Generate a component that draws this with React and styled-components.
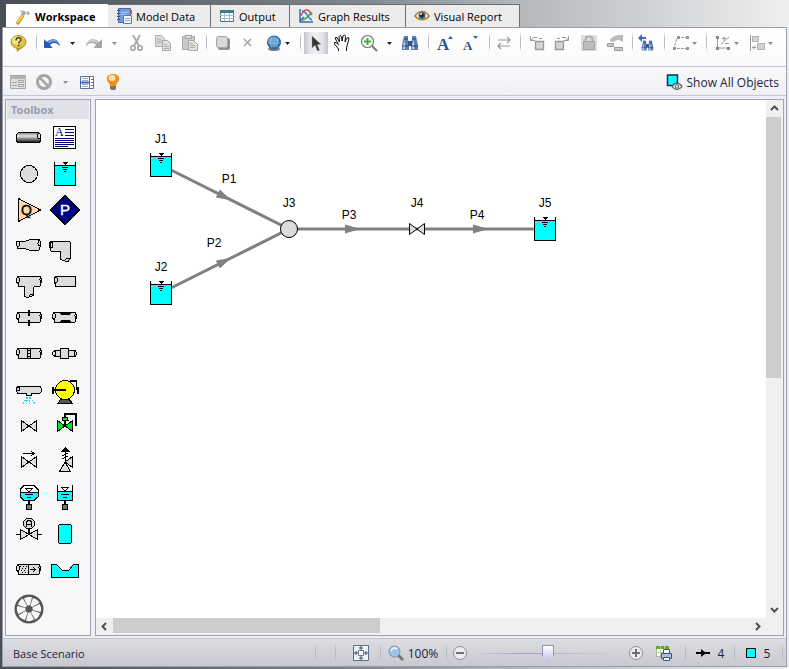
import React from 'react';
import styled, { createGlobalStyle } from 'styled-components';

const GlobalStyle = createGlobalStyle`
  * {
    box-sizing: border-box;
  }

  body {
    margin: 0;
    font-family: 'Open Sans', 'Noto Sans', sans-serif;
    font-size: 11px;
    color: #1e1e3c;
  }

  button {
    font: inherit;
    color: inherit;
  }
`;

const Window = styled.div`
  display: flex;
  flex-direction: column;
  min-height: 100vh;
  padding: 4px 2px 2px;
  background: linear-gradient(90deg, #494e57, #7f858b 45%, #b4b8ba 66%, #eeeff1);
`;

const Tabs = styled.nav`
  display: flex;
  align-items: flex-end;
  height: 23px;
  padding-left: 4px;
`;

const Tab = styled.button`
  display: flex;
  align-items: center;
  gap: 4px;
  width: ${props => props.$width}px;
  height: ${props => (props.$active ? 24 : 23)}px;
  margin-bottom: ${props => (props.$active ? -1 : 0)}px;
  padding: 0 0 0 8px;
  border: 1px solid ${props => (props.$active ? '#fff' : '#6e6e70')};
  border-left-width: ${props => (props.$active ? 1 : 0)}px;
  border-bottom: 0;
  background: ${props => (props.$active ? '#fff' : '#ececec')};
  color: #000;
  font-weight: ${props => (props.$active ? 700 : 400)};
  white-space: nowrap;
`;

const Frame = styled.main`
  display: flex;
  flex: 1;
  flex-direction: column;
  border: 1px solid #9a9dac;
  background: #eeeef3;
`;

const Toolbar = styled.div`
  display: flex;
  align-items: flex-start;
  height: ${props => props.$height}px;
  padding: 4px 7px 0 2px;
  border-bottom: 1px solid #c5c6d2;
  background: linear-gradient(${props => props.$colors});
`;

const ToolButton = styled.button`
  display: flex;
  flex: none;
  align-items: center;
  justify-content: center;
  gap: 3px;
  width: ${props => props.$width}px;
  height: 22px;
  padding: 0;
  border: 0;
  background: ${props =>
    props.$pressed
      ? 'linear-gradient(90deg, #c3c4cf, #e4e4ea 25%, #f0f0f4 50%, #e4e4ea 75%, #c3c4cf)'
      : 'none'};
`;

const Separator = styled.span`
  flex: none;
  width: ${props => props.$width}px;
  height: 20px;
  background: linear-gradient(transparent, #b9bac7 30%, #b9bac7 70%, transparent)
    center / 1px 100% no-repeat;
`;

const ShowAll = styled.button`
  display: flex;
  align-items: center;
  gap: 4px;
  height: 22px;
  margin-left: auto;
  padding: 0;
  border: 0;
  background: none;
  font-size: 12px;
  white-space: nowrap;
`;

const Body = styled.div`
  display: flex;
  flex: 1;
  gap: 4px;
  padding: 3px 2px 2px;
`;

const Toolbox = styled.aside`
  flex: none;
  width: 86px;
  border: 1px solid #9fa2b3;
  background: #f7f7f8;
`;

const ToolboxTitle = styled.h2`
  height: 19px;
  margin: 0 1px 1px;
  padding-left: 4px;
  background: #e1e2e8;
  color: #9b9dac;
  font: bold 11px/20px 'Noto Sans', sans-serif;
`;

const ToolGrid = styled.div`
  display: grid;
  grid-template-columns: 36px 36px;
  grid-auto-rows: 36px;
  padding-left: 5px;
`;

const GridButton = styled.button`
  display: block;
  padding: 0;
  border: 0;
  background: none;
`;

const Canvas = styled.section`
  display: grid;
  flex: 1;
  grid-template-columns: 1fr 17px;
  grid-template-rows: 1fr 17px;
  min-width: 0;
  border: 1px solid #9fa2b3;
  background: #f0f0f0;
`;

const Sheet = styled.div`
  min-width: 0;
  overflow: hidden;
  background: #fff;

  svg {
    display: block;
    font: 12px 'Liberation Sans', sans-serif;
  }
`;

const Scrollbar = styled.div`
  display: flex;
  flex-direction: ${props => (props.$vertical ? 'column' : 'row')};
`;

const ScrollArrow = styled.button`
  display: flex;
  flex: none;
  align-items: center;
  justify-content: center;
  width: 17px;
  height: 17px;
  padding: 0;
  border: 0;
  background: none;
`;

const Thumb = styled.div`
  flex: ${props => props.$size};
  margin: ${props => (props.$vertical ? '0 2px 0 0' : '0 0 2px')};
  background: #cdcdcd;
`;

const Rest = styled.div`
  flex: ${props => props.$size};
`;

const StatusBar = styled.footer`
  display: flex;
  align-items: center;
  height: 28px;
  padding: 1px 1px 0 10px;
  border-top: 1px solid #c2c3cb;
  background: linear-gradient(#dcdde2, #c9cad1);
`;

const Scenario = styled.span`
  flex: 1;
`;

const StatusItem = styled.span`
  display: flex;
  flex: none;
  align-items: center;
  justify-content: center;
  gap: ${props => props.$gap}px;
  width: ${props => props.$width}px;
  font-size: 12px;
`;

const ZoomSlider = styled.input`
  flex: none;
  width: 154px;
  height: 22px;
  margin: 0;
  appearance: none;
  background: linear-gradient(90deg, transparent, #b39cc9 30%, #b39cc9 50%, #b2b3bc 52%, transparent)
    center / 100% 1px no-repeat;

  &::-webkit-slider-thumb {
    appearance: none;
    width: 12px;
    height: 17px;
    border: 1px solid #8f95b4;
    background: linear-gradient(#fff, #b9c2ea);
    clip-path: polygon(0 0, 100% 0, 100% 65%, 50% 100%, 0 65%);
  }
`;

const INK = '#000';
const STEEL = '#dcdcdc';
const AQUA = '#00ffff';

const Icon = ({ size = 18, children }) => (
  <svg width={size} height={size} viewBox={`0 0 ${size} ${size}`} fill="none" overflow="visible" aria-hidden="true">
    {children}
  </svg>
);

const Caret = ({ color = '#8b8b93' }) => (
  <svg width="5" height="3" viewBox="0 0 5 3" aria-hidden="true">
    <path d="M0 0h5L2.500 3z" fill={color} />
  </svg>
);

/* toolbar drawings */

const HelpIcon = () => (
  <Icon>
    <path d="M7 12l1 6 6-5z" fill="#b8992b" />
    <ellipse cx="9.500" cy="8" rx="7.500" ry="6.500" fill="#dfc443" stroke="#a8922f" />
    <ellipse cx="8" cy="6.500" rx="5" ry="4" fill="#f6e88a" />
    <path d="M7 6.500c0-3.500 5-3.500 5-.5 0 1.500-2.300 1.500-2.300 3.500M9.700 10.800v1.500" stroke="#4a4327" strokeWidth="1.500" />
  </Icon>
);

const CurveArrow = ({ dark, light, flip }) => (
  <Icon>
    <g transform={flip ? 'matrix(-1 0 0 1 18 0)' : undefined}>
      <path d="M1 5v9h8.500L7 11c3-3 7-2.500 10 1.500C16 5 9 3 4 8z" fill={dark} />
      <path d="M5 8c4-4.500 10-3 11.500 3C13 6.500 9.500 7 6 9.500z" fill={light} />
    </g>
  </Icon>
);

const CutIcon = () => (
  <Icon>
    <path d="M5 1l6 11M12 1L6 12" stroke="#a8a8a8" strokeWidth="1.800" />
    <circle cx="5" cy="14" r="2.200" stroke="#a0a0a0" strokeWidth="1.500" />
    <circle cx="12" cy="14" r="2.200" stroke="#a0a0a0" strokeWidth="1.500" />
  </Icon>
);

const CopyIcon = () => (
  <Icon>
    <path d="M1.500 1.500h6l3 3v8h-9z" fill="#ddd" stroke="#adadad" />
    <path d="M3 5h4M3 7h5M3 9h4" stroke="#adadad" />
    <path d="M8.500 6.500h5l3 3v7h-8z" fill="#e2e2e2" stroke="#a5a5a5" />
    <path d="M10 10.500h3M10 12.500h5M10 14.500h5" stroke="#aaa" />
  </Icon>
);

const PasteIcon = () => (
  <Icon>
    <path d="M1.500 2.500h12v13h-12z" fill="#c9c9c9" stroke="#aaa" />
    <path d="M4.500 1.500h6v3h-6z" fill="#ddd" stroke="#a0a0a0" />
    <path d="M7.500 6.500h5l4 4v6h-9z" fill="#e2e2e2" stroke="#a5a5a5" />
    <path d="M9 9.500h3M9 11.500h5M9 13.500h5" stroke="#aaa" />
  </Icon>
);

const DuplicateIcon = () => (
  <Icon>
    <rect x="4" y="4" width="12" height="12" rx="2" fill="#8f8f8f" />
    <rect x="2.500" y="2.500" width="11" height="11" rx="2" fill="#d8d8d8" stroke="#a5a5a5" />
  </Icon>
);

const DeleteIcon = () => (
  <Icon>
    <path d="M6 5l7 7M13 5l-7 7" stroke="#a3a3a3" strokeWidth="1.500" />
  </Icon>
);

const GlobeIcon = () => (
  <Icon size={16}>
    <ellipse cx="8" cy="14" rx="6" ry="2" fill="#777e87" />
    <circle cx="8" cy="7.500" r="7" fill="#2a669f" />
    <ellipse cx="7.500" cy="6" rx="5.500" ry="4.500" fill="#5f9bcf" />
    <path
      d="M3 5h10M2 8h12M4 11h8M8 2v11M5.500 2.500c-1.500 3-1.500 7 0 10M10.500 2.500c1.500 3 1.500 7 0 10"
      stroke="#a9cde8"
      strokeWidth=".6"
    />
  </Icon>
);

const PointerIcon = () => (
  <Icon>
    <path d="M5 2v12l3-3 2.500 6 2-1-2.500-5.500h4z" fill="#363636" stroke="#8e8e96" strokeWidth=".4" />
  </Icon>
);

const HandIcon = () => (
  <Icon>
    <path
      d="M5.500 17v-2L1.500 10V8.500H3l2.500 2L2.500 5V3.500H4L6.500 8 6 2.500 7 1.500l1.500 1L9 7l1-5 1.500-1 1 1.500L12 8l2-4 1.500-.5.5 1.500-1.500 5-1 4v3"
      fill="#fff"
      stroke="#111"
      strokeLinejoin="round"
    />
  </Icon>
);

const ZoomInIcon = () => (
  <Icon>
    <path d="M12 12l5 5" stroke="#777" strokeWidth="2" />
    <circle cx="7.500" cy="7.500" r="6" fill="#fbfbfb" stroke="#777" strokeWidth="1.200" />
    <path d="M7.500 4v7M4 7.500h7" stroke="#3faf3a" strokeWidth="2" />
  </Icon>
);

const BinocularShapes = () => (
  <>
    <path d="M3 2h4v4l1 2v8H1v-5zM11 2h4l2 9v5h-7V8l1-2z" fill="#5b80b8" />
    <path d="M3.500 4v4L2 11v4h2V9zM12 4v4l-1 3v4h2V9z" fill="#c6d9ef" />
    <path d="M7 7h4v5H7z" fill="#36558d" />
    <path d="M1 12h7M10 12h7M3 5h4M11 5h4" stroke="#2c4678" />
  </>
);

const FontIcon = ({ size, up }) => (
  <Icon>
    <text x="1" y="16" fontFamily="Liberation Serif" fontWeight="bold" fontSize={size} fill="#304f8f">
      A
    </text>
    <path d={up ? 'M12 5h5L14.500 2z' : 'M11 2h5L13.500 5z'} fill="#3b5fb5" />
  </Icon>
);

const SwapIcon = () => (
  <Icon>
    <path d="M3 6h12M12 3l3 3-3 3M15 12H3M6 9l-3 3 3 3" stroke="#979797" strokeWidth="1.200" />
  </Icon>
);

const RotateIcon = ({ flip }) => (
  <Icon>
    <g transform={flip ? 'matrix(-1 0 0 1 18 0)' : undefined} stroke="#999">
      <path d="M7.500 7.500h8v8h-8z" fill="#d4d4d4" strokeWidth="1.300" />
      <path d="M14 4.500h-3M9 3.500H6L3 6M2.500 2v4.500H7" />
    </g>
  </Icon>
);

const LockIcon = () => (
  <Icon>
    <path d="M1 1h16v16H1z" fill="#dcdcdc" />
    <path d="M5.500 8V5.500c0-4 7-4 7 0V8" stroke="#b0b0b0" strokeWidth="2" />
    <path d="M3.500 7.500h11v8h-11z" fill="#bcbcbc" stroke="#a3a3a3" />
  </Icon>
);

const FlipIcon = () => (
  <Icon>
    <path d="M4 6c3-5 8-5 13-5v7l-4-2c-4 0-4 2-8 2z" fill="#bcbcbc" />
    <path d="M1.500 9.500h6v3h-6zM8.500 13.500h8v3h-8z" fill="#c9c9c9" stroke="#999" />
  </Icon>
);

const FindBackIcon = () => (
  <Icon>
    <g transform="translate(3 5) scale(.72)">
      <BinocularShapes />
    </g>
    <path d="M0 4l4-4v3h4v2H4v3z" fill="#3c68c2" />
  </Icon>
);

const PathIcon = () => (
  <Icon size={16}>
    <path d="M15 2.500H5C3 5 2 8 1.500 13.500H15" stroke="#9a9a9a" strokeDasharray="3 1" />
    <path d="M4 1h3v3H4zM13 1h3v3h-3zM0 12h3v3H0zM13 12h3v3h-3z" fill="#969696" />
  </Icon>
);

const AxesIcon = () => (
  <Icon size={16}>
    <path d="M2.500 2v11H14M6 9l8-7M7 3.500h4M9 1.500v4M10 8.500h4" stroke="#999" />
    <path d="M1 1h3v3H1zM1 12h3v3H1zM12 12h3v3h-3z" fill="#888" />
  </Icon>
);

const AlignIcon = () => (
  <Icon size={16}>
    <path d="M1.500 0v16M3 12.500h4M5 10.500v4" stroke="#999" />
    <path d="M3.500 1.500h6v5h-6zM8.500 8.500h7v6h-7z" fill="#d3d3d3" stroke="#b0b0b0" />
  </Icon>
);

const PropertiesIcon = () => (
  <Icon>
    <path d="M1.500 2.500h15v13h-15z" fill="#dedede" stroke="#a6a6a6" />
    <path d="M1 3h16v3H1z" fill="#b3b3b3" />
    <path d="M3 9.500h5M3 12.500h5" stroke="#a5a5a5" />
    <path d="M9.500 7.500h5v2h-5zM9.500 11.500h5v2h-5z" stroke="#a5a5a5" />
  </Icon>
);

const BlockIcon = () => (
  <Icon>
    <circle cx="9" cy="9" r="6.500" stroke="#a4a4a4" strokeWidth="3" />
    <path d="M4 4l10 10" stroke="#a4a4a4" strokeWidth="2.500" />
  </Icon>
);

const FormIcon = () => (
  <Icon>
    <path d="M2.500 3.500h13v12h-13z" fill="#fff" stroke="#5e6f8f" />
    <path d="M4 5.500h6M4 7.500h6M4 11.500h6M4 13.500h6" stroke="#93aed8" />
    <path d="M2 9.500h9" stroke="#3469c4" strokeWidth="2" />
    <path d="M11.500 4v11M13 6.500h2M13 9.500h2M13 12.500h2" stroke="#626b7a" />
  </Icon>
);

const BulbIcon = () => (
  <Icon>
    <path d="M6 12h6v4l-2 1H8l-2-1z" fill="#7c7469" />
    <path d="M9 1c-8 0-7 7-4 9l1 3h6l1-3c3-2 4-9-4-9z" fill="#f28c1d" />
    <ellipse cx="8" cy="5" rx="3.500" ry="3" fill="#ffe2b0" />
  </Icon>
);

const ShowObjectsIcon = () => (
  <Icon size={16}>
    <path d="M1.500 1h10v10.500h-10z" fill={AQUA} stroke="#1d2d3d" strokeWidth="1.500" />
    <path d="M6 12.500c3-4.500 7-4.500 10 0-3 4-7 4-10 0z" fill="#eee" stroke="#555" strokeWidth="1.200" />
    <circle cx="11" cy="12.500" r="1.700" stroke="#555" />
  </Icon>
);

/* tab drawings */

const HammerIcon = () => (
  <Icon size={16}>
    <path d="M2 15l6-9" stroke="#b87f15" strokeWidth="3.500" />
    <path d="M2 14l6-8" stroke="#f7cb4d" strokeWidth="2.500" />
    <path d="M4 2l4-1 4 2 1-1 2 3-2 1-2-2-2 3-3-2 1-2z" fill="#a4a8ab" />
    <path d="M5 2l3-.5 4 2" stroke="#e1e4e6" />
  </Icon>
);

const NotebookIcon = () => (
  <Icon size={16}>
    <path d="M2.500 .5h12v14h-12z" fill="#6f9de0" stroke="#4168a6" />
    <path d="M15 2v4" stroke="#c9564a" strokeWidth="2" />
    <path d="M5 4.500h7M5 6.500h5" stroke="#a9c6f2" />
    <path d="M7.500 7.500h8v8h-8z" fill="#eef3fa" stroke="#5b7cae" />
    <path d="M9 10.500h5M9 12.500h5" stroke="#8fa8cf" />
    <path d="M1 2.500h3M1 5.500h3M1 8.500h3M1 11.500h3" stroke="#43516b" />
  </Icon>
);

const TableIcon = () => (
  <Icon size={16}>
    <path d="M1.500 2.500h13v11h-13z" fill="#fff" stroke="#4a7191" />
    <path d="M1 2h14v3H1z" fill="#3c7d89" />
    <path d="M1 7.500h14M1 10.500h14M5.500 5v8M10.500 5v8" stroke="#9dbdcc" />
  </Icon>
);

const GraphIcon = () => (
  <Icon size={16}>
    <path d="M2 1v13H15M2 13l4-4" stroke="#346bb8" strokeWidth="1.500" />
    <path d="M3 8c3-8 7-8 11-1" stroke="#e24444" strokeWidth="1.500" />
    <path d="M4 3c5 0 5 7 10 9" stroke="#4276d4" strokeWidth="1.500" />
    <path d="M4 12c4 0 6-5 10-7" stroke="#37a94d" strokeWidth="1.500" />
  </Icon>
);

const EyeIcon = () => (
  <Icon size={16}>
    <path d="M1 8c4-6 10-6 14 0-4 5-10 5-14 0z" fill="#fff" stroke="#bd7a20" strokeWidth="1.700" />
    <circle cx="8" cy="7.500" r="3.500" fill="#2f5f7b" />
    <circle cx="8" cy="7.500" r="1.700" fill="#0b1a2b" />
    <circle cx="7" cy="6" r="1" fill="#dff" />
  </Icon>
);

/* component symbols, drawn around (18, 18) */

const Reservoir = () => (
  <g shapeRendering="crispEdges">
    <path d="M7 9h22v20H7z" fill={AQUA} />
    <path d="M7.500 6v23.500h21V6M7 9.500h22" stroke={INK} fill="none" />
    <path d="M15 6h6l-3 3zM15 11h6v1h-6zM16 13h4v1h-4zM17 15h2v1h-2z" fill={INK} />
  </g>
);

const Junction = () => <circle cx="18" cy="18" r="8.500" fill={STEEL} stroke={INK} />;

const Bowtie = ({ fill = STEEL }) => (
  <path d="M10.500 12.500v11l7.500-5.500zM25.500 12.500v11l-7.500-5.500z" fill={fill} stroke={INK} />
);

const PipeBody = ({ left = 5, right = 30, bottom = 23 }) => (
  <>
    <path
      d={`M${left + 2} 12.500H${right - 2}l1.500 2v4l-1 1v2l-1 1H${left + 3}l-1-1v-2l-1.500-1v-4z`}
      transform={`translate(0 ${bottom - 23})`}
      fill={STEEL}
      stroke={INK}
    />
    <ellipse cx={left + 2} cy={bottom - 7} rx="1.500" ry="2.500" fill={STEEL} stroke={INK} />
    <path d={`M${right - 1} ${bottom - 10}c-2 2-1 4 0 6`} stroke={INK} fill="none" />
  </>
);

const symbols = [
  [
    'Pipe',
    <>
      <defs>
        <linearGradient id="pipeShade" x2="0" y2="1">
          <stop stopColor="#777" />
          <stop offset=".35" stopColor="#e5e5e5" />
          <stop offset="1" stopColor="#111" />
        </linearGradient>
      </defs>
      <rect x="5.500" y="12.500" width="24" height="10" rx="3" fill="url(#pipeShade)" stroke={INK} />
      <ellipse cx="28" cy="16" rx="1.500" ry="2.500" fill="#ddd" stroke={INK} />
    </>,
  ],
  [
    'Annotation',
    <>
      <path d="M6.500 6.500h22v22h-22z" fill="#fff" stroke={INK} />
      <text x="8" y="16" fontFamily="Liberation Serif" fontSize="12" fill="#000080">
        A
      </text>
      <path
        d="M18 9.500h9M18 12.500h9M18 15.500h9M8 18.500h19M8 20.500h19M8 22.500h19M8 24.500h19M8 26.500h13"
        stroke="#000080"
      />
    </>,
  ],
  ['Branch', <Junction />],
  ['Reservoir', <Reservoir />],
  [
    'Assigned flow',
    <>
      <path d="M7.500 6.500v23l22-11.500z" fill="#ffd9ad" stroke={INK} />
      <text x="10" y="23" fontFamily="Liberation Sans" fontSize="14" fill={INK} stroke={INK} strokeWidth=".4">
        Q
      </text>
    </>,
  ],
  [
    'Assigned pressure',
    <>
      <path d="M18 3.500L32.500 18 18 32.500 3.500 18z" fill="#000084" stroke={INK} />
      <text x="13" y="23" fontFamily="Liberation Sans" fontSize="15" fill="#fff" stroke="#fff" strokeWidth=".4">
        P
      </text>
    </>,
  ],
  [
    'Area change',
    <>
      <path d="M7 13.500h7l5-2h9l1.500 2v5l-1 1v2l-1 1H19l-5-2H7l-1-1v-2l-.5-1v-3z" fill={STEEL} stroke={INK} />
      <ellipse cx="7" cy="16" rx="1.500" ry="2.500" fill={STEEL} stroke={INK} />
      <path d="M28 12c-2 3-1 5 1 6" stroke={INK} fill="none" />
    </>,
  ],
  [
    'Bend',
    <>
      <path
        d="M4 13.500h18l1.500 1V30l-1 2.500-2 1h-2l-1-1h-2l-2-1.500v-7.500H5l-1.500-1v-2l-1-1v-5z"
        fill={STEEL}
        stroke={INK}
      />
      <ellipse cx="4.500" cy="17" rx="1.500" ry="2.500" fill={STEEL} stroke={INK} />
      <path d="M18 32c1-2 3-2 5-1" stroke={INK} fill="none" />
    </>,
  ],
  [
    'Tee',
    <>
      <PipeBody right={31} />
      <path d="M14 21h9v3h-9z" fill={STEEL} />
      <path d="M13.500 23v9l2 1.500h2l1-1h2l2-1.500v-8" fill={STEEL} stroke={INK} />
      <path d="M18 32c1-2 3-2 4-1" stroke={INK} fill="none" />
    </>,
  ],
  [
    'Dead end',
    <>
      <path d="M9 12.500h19.500v10H9l-1-1v-2l-1-1v-4z" fill={STEEL} stroke={INK} />
      <ellipse cx="9" cy="16" rx="1.500" ry="2.500" fill={STEEL} stroke={INK} />
    </>,
  ],
  [
    'Orifice',
    <>
      <PipeBody right={31} />
      <path d="M17 10h2v6h-2zM17 20h2v6h-2z" fill={INK} />
    </>,
  ],
  [
    'Venturi',
    <>
      <PipeBody />
      <path d="M11 12h14l-3 3h-8zM11 23h14l-3-3h-8z" fill={INK} />
    </>,
  ],
  [
    'Screen',
    <>
      <PipeBody right={31} />
      <path d="M16.500 12v11M19.500 12v11" stroke={INK} />
      <path d="M16 14.500h4M16 17.500h4M16 20.500h4" stroke={INK} />
    </>,
  ],
  [
    'General component',
    <>
      <path d="M8 14.500h20l1.500 2v2l-1.500 2H8l-2.500-2v-2z" fill={STEEL} stroke={INK} />
      <path d="M8.500 15v5M27.500 15v5" stroke={INK} />
      <path d="M13.500 12.500h8v10h-8z" fill={STEEL} stroke={INK} />
    </>,
  ],
  [
    'Spray discharge',
    <>
      <path d="M7 14.500h22l1.500 2v3l-2 2H21l-1 2h-4l-1-2H7l-1.500-2v-3z" fill={STEEL} stroke={INK} />
      <ellipse cx="7" cy="17" rx="1.500" ry="2" fill={STEEL} stroke={INK} />
      <path d="M16 25l-4 7M17 25l-2 7M18 25l1 7M19 25l5 7" stroke="#2bd3e8" strokeDasharray="2 1" />
    </>,
  ],
  [
    'Pump',
    <>
      <path d="M14 27h8l3 4H11z" fill="#555" stroke={INK} />
      <circle cx="18" cy="18" r="9.500" fill="#ffff00" stroke={INK} />
      <path d="M5 18h14M6 15v7M23 9h6.500v9M31 15v7" stroke={INK} strokeWidth="1.500" fill="none" />
    </>,
  ],
  ['Valve', <Bowtie />],
  [
    'Control valve',
    <>
      <Bowtie fill="#00e52b" />
      <path d="M18 18V6h11v12" stroke={INK} strokeWidth="2" fill="none" />
      <path d="M15 12c0-4 6-4 6 0z" fill="#00e52b" stroke={INK} />
    </>,
  ],
  [
    'Check valve',
    <>
      <Bowtie />
      <path d="M12 9.500h11M20 7l3 2.500-3 2.500" stroke={INK} fill="none" />
    </>,
  ],
  [
    'Relief valve',
    <>
      <path d="M18 18l7.500-5.500v11zM18 18l-5.500 9.500h11z" fill={STEEL} stroke={INK} />
      <path d="M18 18V5M15 15l6-3M15 12l6-3" stroke={INK} />
      <path d="M18 3l5 5H13z" fill={INK} />
    </>,
  ],
  [
    'Gas accumulator',
    <>
      <path d="M13 5.500h10l4 4v7l-4 4H13l-4-4v-7z" fill="#fff" stroke={INK} />
      <path d="M9.500 12h17v4.500l-4 3.500h-9l-4-3.500z" fill={AQUA} />
      <path d="M9 12.500h18M14 14.500h8M16 17.500h4" stroke={INK} />
      <path d="M14.500 8.500h7L18 12z" fill="#fff" stroke={INK} />
      <path d="M18 21v4" stroke={INK} strokeWidth="2" />
      <path d="M15.500 24.500h5v5h-5z" fill="#777" stroke={INK} />
    </>,
  ],
  [
    'Surge tank',
    <>
      <path d="M11 12h14v9H11z" fill={AQUA} />
      <path d="M10.500 5v15.500h15V5M10 11.500h16M14 14.500h8M16 17.500h4" stroke={INK} fill="none" />
      <path d="M14.500 7.500h7L18 11z" fill="#fff" stroke={INK} />
      <path d="M18 21v4" stroke={INK} strokeWidth="2" />
      <path d="M15.500 24.500h5v5h-5z" fill="#777" stroke={INK} />
    </>,
  ],
  [
    'Vacuum breaker',
    <>
      <path d="M5 18.500h26M18 13v5" stroke={INK} strokeWidth="1.500" />
      <path d="M9.500 13.500v10l8.500-5zM26.500 13.500v10l-8.500-5z" fill={STEEL} stroke={INK} />
      <circle cx="18" cy="7.500" r="5.500" fill={STEEL} stroke={INK} />
      <path d="M15.500 10.500V6l1.500-1.500h2L20.500 6v4.500M15.500 8.500h5" stroke={INK} fill="none" />
    </>,
  ],
  ['Volume balance', <rect x="11.500" y="8.500" width="13" height="19" rx="2" fill={AQUA} stroke={INK} />],
  [
    'Jumper',
    <>
      <PipeBody />
      <path d="M9 14.500h7M11 16.500h5M10 18.500h6M11 20.500h5" stroke={INK} strokeDasharray="1 2" />
      <path d="M17.500 12v11M19 17.500h5M22 15l2.500 2.500L22 20" stroke={INK} fill="none" />
    </>,
  ],
  ['Weir', <path d="M4.500 12.500h5l6 6h6l5-6h5v13h-27z" fill={AQUA} stroke={INK} />],
];

const bladeAngles = [0, 45, 90, 135, 180, 225, 270, 315];

const FanSymbol = () => (
  <svg width="36" height="36" viewBox="0 0 36 36" aria-hidden="true">
    <circle cx="18" cy="21" r="13.500" fill="#5a5a5a" stroke="#555" strokeWidth="2" />
    {bladeAngles.map(angle => (
      <path
        key={angle}
        d="M16.500 17.500L13 10.500q4-2.500 8-1.200l-2 8z"
        fill="#f7f7f8"
        transform={`rotate(${angle} 18 21)`}
      />
    ))}
    <circle cx="18" cy="21" r="3" fill="#555" />
  </svg>
);

/* model shown on the sheet */

const nodes = [
  { id: 'J1', x: 65, y: 65, symbol: <Reservoir /> },
  { id: 'J2', x: 65, y: 193, symbol: <Reservoir /> },
  { id: 'J3', x: 193, y: 129, symbol: <Junction /> },
  { id: 'J4', x: 321, y: 129, symbol: <Bowtie /> },
  { id: 'J5', x: 449, y: 129, symbol: <Reservoir /> },
];

const pipes = [
  { id: 'P1', from: 0, to: 2, labelX: 133, labelY: 83 },
  { id: 'P2', from: 1, to: 2, labelX: 118, labelY: 147 },
  { id: 'P3', from: 2, to: 3, labelX: 253, labelY: 119 },
  { id: 'P4', from: 3, to: 4, labelX: 381, labelY: 119 },
];

const Diagram = () => (
  <svg width="600" height="400" textAnchor="middle">
    {pipes.map(pipe => {
      const a = nodes[pipe.from];
      const b = nodes[pipe.to];
      const angle = (Math.atan2(b.y - a.y, b.x - a.x) * 180) / Math.PI;
      return (
        <g key={pipe.id}>
          <path d={`M${a.x} ${a.y}L${b.x} ${b.y}`} stroke="#808080" strokeWidth="3" />
          <path
            d="M-8-4.500L7 0L-8 4.500z"
            fill="#808080"
            transform={`translate(${(a.x + b.x) / 2} ${(a.y + b.y) / 2}) rotate(${angle})`}
          />
          <text x={pipe.labelX} y={pipe.labelY}>
            {pipe.id}
          </text>
        </g>
      );
    })}
    {nodes.map(node => (
      <g key={node.id}>
        <g transform={`translate(${node.x - 18} ${node.y - 18})`}>{node.symbol}</g>
        <text x={node.x} y={node.y - 22}>
          {node.id}
        </text>
      </g>
    ))}
  </svg>
);

const tabs = [
  { label: 'Workspace', width: 102, icon: <HammerIcon />, active: true },
  { label: 'Model Data', width: 103, icon: <NotebookIcon /> },
  { label: 'Output', width: 79, icon: <TableIcon /> },
  { label: 'Graph Results', width: 116, icon: <GraphIcon /> },
  { label: 'Visual Report', width: 114, icon: <EyeIcon /> },
];

// entries without a label are separators
const mainTools = [
  { label: 'Help', width: 26, icon: <HelpIcon /> },
  { width: 10 },
  { label: 'Undo', width: 21, icon: <CurveArrow dark="#2459b7" light="#79a5e5" /> },
  { label: 'Undo list', width: 21, icon: <Caret color="#222" /> },
  { label: 'Redo', width: 21, icon: <CurveArrow dark="#a6a6a6" light="#d0d0d0" flip /> },
  { label: 'Redo list', width: 21, icon: <Caret /> },
  { label: 'Cut', width: 24, icon: <CutIcon /> },
  { label: 'Copy', width: 28, icon: <CopyIcon /> },
  { label: 'Paste', width: 25, icon: <PasteIcon /> },
  { width: 9 },
  { label: 'Duplicate', width: 23, icon: <DuplicateIcon /> },
  { label: 'Delete', width: 26, icon: <DeleteIcon /> },
  { label: 'Web', width: 36, icon: <GlobeIcon />, caret: '#222' },
  { width: 8 },
  { label: 'Select', width: 24, icon: <PointerIcon />, pressed: true },
  { label: 'Pan', width: 28, icon: <HandIcon /> },
  { label: 'Zoom in', width: 26, icon: <ZoomInIcon /> },
  { label: 'Zoom list', width: 14, icon: <Caret color="#222" /> },
  {
    label: 'Find',
    width: 28,
    icon: (
      <Icon>
        <BinocularShapes />
      </Icon>
    ),
  },
  { width: 8 },
  { label: 'Larger text', width: 26, icon: <FontIcon size={17} up /> },
  { label: 'Smaller text', width: 26, icon: <FontIcon size={13} /> },
  { width: 10 },
  { label: 'Reverse direction', width: 20, icon: <SwapIcon /> },
  { width: 12 },
  { label: 'Rotate left', width: 22, icon: <RotateIcon /> },
  { label: 'Rotate right', width: 28, icon: <RotateIcon flip /> },
  { label: 'Lock', width: 26, icon: <LockIcon /> },
  { label: 'Flip', width: 26, icon: <FlipIcon /> },
  { width: 8 },
  { label: 'Find previous', width: 22, icon: <FindBackIcon /> },
  { width: 12 },
  { label: 'Segments', width: 30, icon: <PathIcon />, caret: '#8b8b93' },
  { width: 12 },
  { label: 'Scale', width: 30, icon: <AxesIcon />, caret: '#8b8b93' },
  { label: 'Align', width: 38, icon: <AlignIcon />, caret: '#8b8b93' },
];

const editTools = [
  { label: 'Properties', width: 26, icon: <PropertiesIcon /> },
  { label: 'Disable', width: 26, icon: <BlockIcon /> },
  { label: 'Disable list', width: 17, icon: <Caret /> },
  { label: 'Inspect', width: 26, icon: <FormIcon /> },
  { label: 'Highlight', width: 26, icon: <BulbIcon /> },
];

const renderTool = (tool, index) =>
  tool.label ? (
    <ToolButton key={tool.label} aria-label={tool.label} $width={tool.width} $pressed={tool.pressed}>
      {tool.icon}
      {tool.caret && <Caret color={tool.caret} />}
    </ToolButton>
  ) : (
    <Separator key={index} $width={tool.width} />
  );

const Arrow = ({ label, turn }) => (
  <ScrollArrow aria-label={label}>
    <svg width="9" height="9" viewBox="0 0 9 9" aria-hidden="true">
      <path
        d="M1 6l3.500-3.500L8 6"
        fill="none"
        stroke="#505050"
        strokeWidth="2"
        transform={`rotate(${turn} 4.500 4.500)`}
      />
    </svg>
  </ScrollArrow>
);

const RoundIcon = ({ plus }) => (
  <Icon size={16}>
    <circle cx="8" cy="8" r="6.500" fill="#eeeef1" stroke="#8d8e95" />
    <path d={plus ? 'M4 8h8M8 4v8' : 'M4 8h8'} stroke="#707078" strokeWidth="2" />
  </Icon>
);

const Status = () => (
  <StatusBar>
    <Scenario>Base Scenario</Scenario>
    <Separator $width={20} />
    <Separator $width={20} />
    <ToolButton $width={32} aria-label="Fit to window">
      <Icon size={16}>
        <path d="M.5.5h15v15H.5z" fill="#edf3fa" stroke="#5d7288" />
        <path d="M8 1v4M8 11v4M1 8h4M11 8h4M6 3h4M6 13h4M3 6v4M13 6v4" stroke="#3b5068" />
        <path d="M5.500 5.500h5v5h-5z" fill="#fff" stroke="#667b92" />
      </Icon>
    </ToolButton>
    <Separator $width={6} />
    <StatusItem $width={60} $gap={4}>
      <Icon size={16}>
        <path d="M10 10l5 5" stroke="#777" strokeWidth="3" />
        <circle cx="6.500" cy="6.500" r="5.500" fill="#9dc5e9" stroke="#7d8d9c" />
        <path d="M3 6c1-3 4-4 6-2" stroke="#fff" strokeWidth="1.500" />
      </Icon>
      <span>100%</span>
    </StatusItem>
    <Separator $width={6} />
    <ToolButton $width={22} aria-label="Zoom out">
      <RoundIcon />
    </ToolButton>
    <ZoomSlider type="range" aria-label="Zoom" defaultValue="50" />
    <ToolButton $width={22} aria-label="Zoom in step">
      <RoundIcon plus />
    </ToolButton>
    <ToolButton $width={34} aria-label="Print layout">
      <Icon size={16}>
        <path d="M.5 1.500h12v10H.5z" fill="#fff" stroke="#a9b8a0" />
        <path d="M0 1h13v3H0z" fill="#69a52e" />
        <path d="M4.500 1v10M8.500 1v10M0 7.500h12" stroke="#b7d19c" />
        <path d="M5.500 8.500h10v5h-10z" fill="#a9bde0" stroke="#3c558b" />
        <path d="M7.500 4.500h6v4h-6zM7.500 12.500h6v3h-6z" fill="#fff" stroke="#3c558b" />
      </Icon>
    </ToolButton>
    <Separator $width={8} />
    <StatusItem $width={42} $gap={8}>
      <svg width="14" height="8" viewBox="0 0 14 8" aria-hidden="true">
        <path d="M0 4h14" stroke={INK} strokeWidth="2" />
        <path d="M5 0l5 4-5 4z" fill={INK} />
      </svg>
      4
    </StatusItem>
    <Separator $width={6} />
    <StatusItem $width={42} $gap={8}>
      <svg width="10" height="10" viewBox="0 0 10 10" aria-hidden="true">
        <path d="M.5.5h9v9h-9z" fill={AQUA} stroke={INK} />
      </svg>
      5
    </StatusItem>
    <Separator $width={6} />
  </StatusBar>
);

const App = () => (
  <>
    <GlobalStyle />
    <Window>
      <Tabs>
        {tabs.map(tab => (
          <Tab key={tab.label} $width={tab.width} $active={tab.active}>
            {tab.icon}
            {tab.label}
          </Tab>
        ))}
      </Tabs>
      <Frame>
        <Toolbar $height={39} $colors="#fff, #fafafc">
          {mainTools.map(renderTool)}
        </Toolbar>
        <Toolbar $height={29} $colors="#f9f9fb, #eff0f4">
          {editTools.map(renderTool)}
          <ShowAll>
            <ShowObjectsIcon />
            Show All Objects
          </ShowAll>
        </Toolbar>
        <Body>
          <Toolbox>
            <ToolboxTitle>Toolbox</ToolboxTitle>
            <ToolGrid>
              {symbols.map(([name, drawing]) => (
                <GridButton key={name} aria-label={name}>
                  <svg width="36" height="36" viewBox="0 0 36 36" shapeRendering="crispEdges" aria-hidden="true">
                    {drawing}
                  </svg>
                </GridButton>
              ))}
              <GridButton aria-label="Turbine">
                <FanSymbol />
              </GridButton>
            </ToolGrid>
          </Toolbox>
          <Canvas>
            <Sheet>
              <Diagram />
            </Sheet>
            <Scrollbar $vertical>
              <Arrow label="Scroll up" turn={0} />
              <Thumb $size={260} $vertical />
              <Rest $size={223} />
              <Arrow label="Scroll down" turn={180} />
            </Scrollbar>
            <Scrollbar>
              <Arrow label="Scroll left" turn={270} />
              <Thumb $size={266} />
              <Rest $size={368} />
              <Arrow label="Scroll right" turn={90} />
            </Scrollbar>
          </Canvas>
        </Body>
        <Status />
      </Frame>
    </Window>
  </>
);

export default App;
